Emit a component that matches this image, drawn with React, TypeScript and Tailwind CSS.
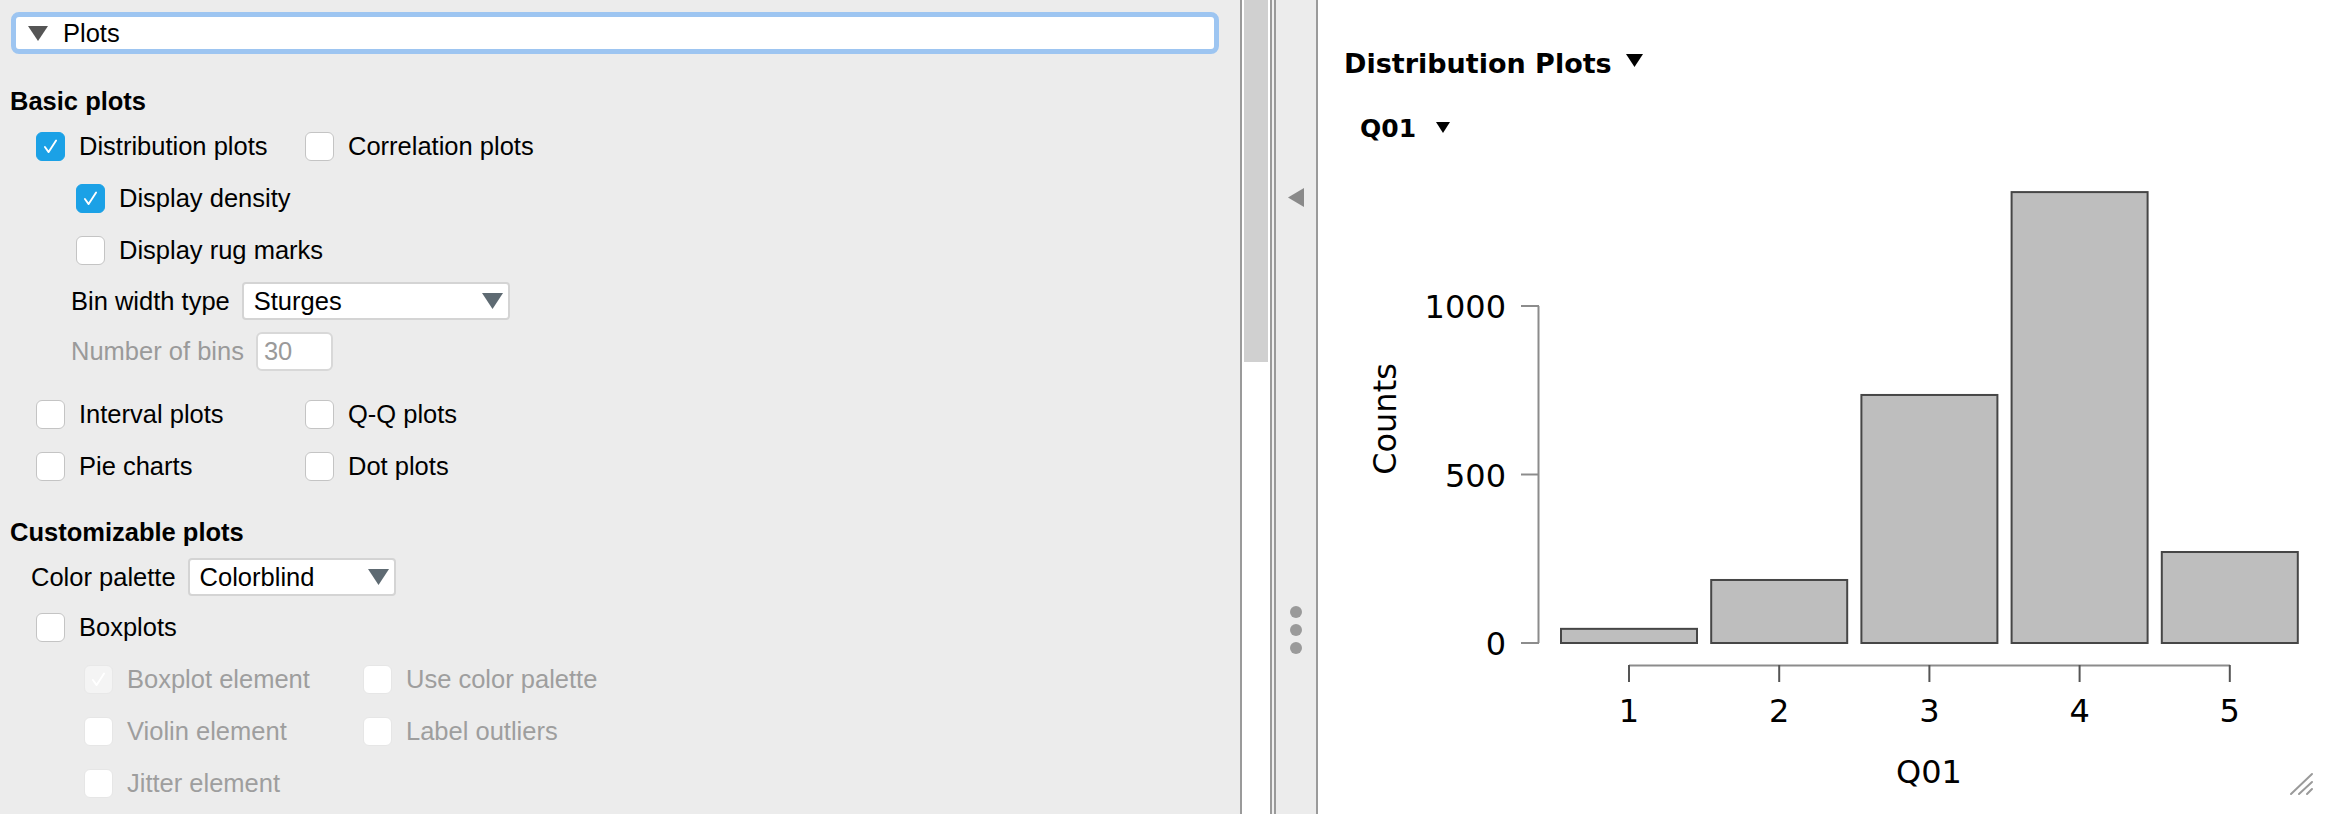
import React from "react";

type OptionProps = {
  label: string;
  checked?: boolean;
  disabled?: boolean;
  className?: string;
};

function Checkbox({ checked = false, disabled = false }: { checked?: boolean; disabled?: boolean }) {
  let cls = "bg-white border-[#c4c4c4]";
  if (checked && !disabled) cls = "bg-[#1ba1e6] border-[#1ba1e6]";
  else if (checked) cls = "bg-[#f4f4f4] border-[#e8e8e8]";
  else if (disabled) cls = "bg-white border-[#e6e6e6]";
  return (
    <span className={`flex h-[29px] w-[29px] shrink-0 rounded-[6px] border ${cls}`}>
      {checked && (
        <svg viewBox="0 0 29 29" className="h-full w-full">
          <polyline
            points="8.5,15 12.5,20.5 20.5,8"
            fill="none"
            stroke="#ffffff"
            strokeWidth="2"
            strokeLinecap="round"
            strokeLinejoin="round"
          />
        </svg>
      )}
    </span>
  );
}

function Option({ label, checked, disabled, className = "" }: OptionProps) {
  return (
    <div className={`flex items-center gap-[14px] ${className}`}>
      <Checkbox checked={checked} disabled={disabled} />
      <span className={disabled ? "text-[#9e9e9e]" : "text-black"}>{label}</span>
    </div>
  );
}

function Dropdown({ value, width }: { value: string; width: string }) {
  return (
    <div className={`flex h-[38px] ${width} items-center justify-between rounded-[4px] border-2 border-[#d4d4d4] bg-white pl-[10px] pr-[5px]`}>
      <span>{value}</span>
      <svg width="21" height="16" viewBox="0 0 21 16">
        <polygon points="0,0 21,0 10.5,16" fill="#5e6a72" />
      </svg>
    </div>
  );
}

// counts per answer category, read off the histogram
const COUNTS = [42, 187, 736, 1338, 270];
const yPos = (v: number) => 643 - v * 0.337;
const label = "font-['DejaVu_Sans',sans-serif] text-[32px] font-normal";

function Histogram() {
  return (
    <svg width="1012" height="650" viewBox="1318 164 1012 650" className="mt-[20px] block">
      {/* y axis */}
      <line x1="1538.5" y1="306" x2="1538.5" y2="643" stroke="#8c8c8c" strokeWidth="2" />
      {[0, 500, 1000].map((v) => (
        <g key={v}>
          <line x1="1521" y1={yPos(v)} x2="1539" y2={yPos(v)} stroke="#8c8c8c" strokeWidth="2" />
          <text x="1506" y={yPos(v) + 12} textAnchor="end" fill="#000" className={label}>
            {v}
          </text>
        </g>
      ))}
      <text transform="translate(1396 419) rotate(-90)" textAnchor="middle" fill="#000" className={label}>
        Counts
      </text>

      {/* bars */}
      {COUNTS.map((c, i) => {
        const x = 1561 + i * 150.2;
        const top = yPos(c);
        return (
          <rect
            key={i}
            x={x}
            y={top}
            width="136"
            height={643 - top}
            fill="#bebebe"
            stroke="#464646"
            strokeWidth="2"
          />
        );
      })}

      {/* x axis */}
      <line x1="1629" y1="665.5" x2="2230" y2="665.5" stroke="#8c8c8c" strokeWidth="2" />
      {COUNTS.map((_, i) => {
        const x = 1629 + i * 150.2;
        return (
          <g key={i}>
            <line x1={x} y1="665" x2={x} y2="682" stroke="#555" strokeWidth="2" />
            <text x={x} y="722" textAnchor="middle" fill="#000" className={label}>
              {i + 1}
            </text>
          </g>
        );
      })}
      <text x="1929" y="783" textAnchor="middle" fill="#000" className={label}>
        Q01
      </text>

      {/* resize grip */}
      <g stroke="#9a9a9a" strokeWidth="2" strokeLinecap="round">
        <line x1="2312" y1="774" x2="2291" y2="794" />
        <line x1="2312" y1="782" x2="2299" y2="794" />
        <line x1="2312" y1="789" x2="2307" y2="794" />
      </g>
    </svg>
  );
}

export default function App() {
  return (
    <div className="flex h-[814px] w-[2330px] overflow-hidden bg-white">
      {/* options panel */}
      <div className="w-[1242px] shrink-0 border-r-2 border-[#9a9a9a] bg-[#ececec] font-['Liberation_Sans',Arial,sans-serif] text-[25.5px] leading-[30px] text-black">
        <div className="ml-[11px] mt-[12px] flex h-[42px] w-[1208px] items-center rounded-[8px] border-[5px] border-[#9dc5f1] bg-white">
          <svg width="20" height="15" viewBox="0 0 20 15" className="ml-[12px]">
            <polygon points="0,0 20,0 10,15" fill="#555555" />
          </svg>
          <span className="ml-[15px]">Plots</span>
        </div>

        <div className="ml-[10px] mt-[32px] font-bold">Basic plots</div>
        <div className="mt-[4px]">
          <div className="flex h-[52px] items-center pl-[36px]">
            <Option label="Distribution plots" checked className="w-[269px]" />
            <Option label="Correlation plots" />
          </div>
          <div className="flex h-[52px] items-center pl-[76px]">
            <Option label="Display density" checked />
          </div>
          <div className="flex h-[52px] items-center pl-[76px]">
            <Option label="Display rug marks" />
          </div>
          <div className="flex h-[50px] items-center gap-[12px] pl-[71px]">
            <span>Bin width type</span>
            <Dropdown value="Sturges" width="w-[268px]" />
          </div>
          <div className="flex h-[50px] items-center gap-[12px] pl-[71px] text-[#9a9a9a]">
            <span>Number of bins</span>
            <div className="flex h-[39px] w-[77px] items-center rounded-[6px] border-2 border-[#d8d8d8] bg-white pl-[6px]">
              30
            </div>
          </div>
          <div className="mt-[12px] flex h-[52px] items-center pl-[36px]">
            <Option label="Interval plots" className="w-[269px]" />
            <Option label="Q-Q plots" />
          </div>
          <div className="flex h-[52px] items-center pl-[36px]">
            <Option label="Pie charts" className="w-[269px]" />
            <Option label="Dot plots" />
          </div>
        </div>

        <div className="ml-[10px] mt-[25px] font-bold">Customizable plots</div>
        <div className="mt-[6px] flex h-[48px] items-center gap-[12px] pl-[31px]">
          <span>Color palette</span>
          <Dropdown value="Colorblind" width="w-[208px]" />
        </div>
        <div className="flex h-[52px] items-center pl-[36px]">
          <Option label="Boxplots" />
        </div>
        <div className="flex h-[52px] items-center pl-[84px]">
          <Option label="Boxplot element" checked disabled className="w-[279px]" />
          <Option label="Use color palette" disabled />
        </div>
        <div className="flex h-[52px] items-center pl-[84px]">
          <Option label="Violin element" disabled className="w-[279px]" />
          <Option label="Label outliers" disabled />
        </div>
        <div className="flex h-[52px] items-center pl-[84px]">
          <Option label="Jitter element" disabled />
        </div>
      </div>

      {/* scrollbar */}
      <div className="w-[30px] shrink-0 border-r-2 border-[#9a9a9a] bg-white">
        <div className="mx-[2px] h-[362px] bg-[#d0d0d0]" />
      </div>
      <div className="w-[2px] shrink-0 bg-[#f0f0f0]" />

      {/* splitter handle */}
      <div className="flex w-[44px] shrink-0 flex-col items-center border-x-2 border-[#9a9a9a] bg-[#ececec]">
        <svg width="16" height="19" viewBox="0 0 16 19" className="mt-[188px]">
          <polygon points="16,0 16,19 0,9.5" fill="#8a8a8a" />
        </svg>
        <div className="mt-[399px] flex flex-col gap-[6px]">
          <span className="h-[12px] w-[12px] rounded-full bg-[#9a9a9a]" />
          <span className="h-[12px] w-[12px] rounded-full bg-[#9a9a9a]" />
          <span className="h-[12px] w-[12px] rounded-full bg-[#9a9a9a]" />
        </div>
      </div>

      {/* output panel */}
      <div className="w-[1012px] shrink-0 bg-white font-['DejaVu_Sans',sans-serif] text-black">
        <div className="flex pl-[26px] pt-[49px] font-bold">
          <span className="text-[27px] leading-[30px]">Distribution Plots</span>
          <svg width="17" height="13" viewBox="0 0 17 13" className="ml-[14px] mt-[5px]">
            <polygon points="0,0 17,0 8.5,13" fill="#000" />
          </svg>
        </div>
        <div className="mt-[35px] flex pl-[42px] font-bold">
          <span className="text-[25px] leading-[30px]">Q01</span>
          <svg width="14" height="11" viewBox="0 0 14 11" className="ml-[20px] mt-[8px]">
            <polygon points="0,0 14,0 7,11" fill="#000" />
          </svg>
        </div>
        <Histogram />
      </div>
    </div>
  );
}
